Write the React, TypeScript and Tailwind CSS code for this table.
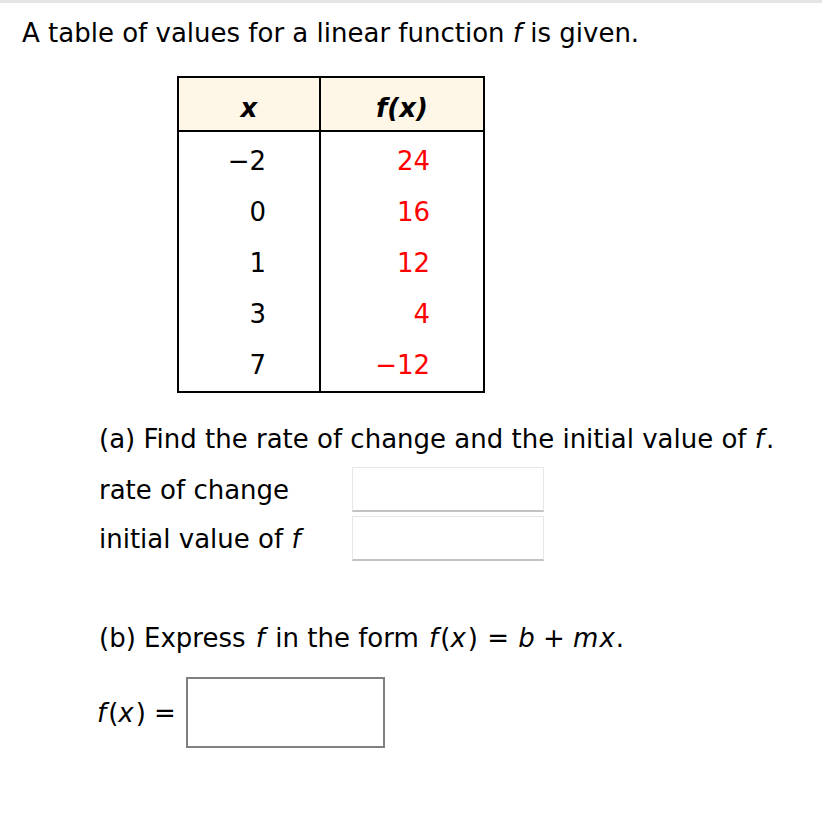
const rows = [
  { x: '−2', fx: '24' },
  { x: '0', fx: '16' },
  { x: '1', fx: '12' },
  { x: '3', fx: '4' },
  { x: '7', fx: '−12' },
]

// italic variable with a little math spacing after it
function V({ children, gap = '' }: { children: React.ReactNode; gap?: string }) {
  return <i className={`inline-block ${gap}`}>{children}</i>
}

export default function App() {
  return (
    <div
      className="min-h-screen border-t-[3px] border-[#e4e4e4] bg-white text-[26px] text-black"
      style={{ fontFamily: '"DejaVu Sans", Verdana, sans-serif' }}
    >
      <p className="pl-[22px] pt-[15px] leading-[30px]">
        A table of values for a linear function <i>f</i> is given.
      </p>

      {/* values table */}
      <div className="ml-[177px] mt-[28px] w-[308px] border-2 border-black">
        <div className="flex h-[54px] border-b-2 border-black bg-[#fef6e7] pt-[8px] font-bold italic">
          <div className="-mt-[8px] flex w-[142px] items-center justify-center border-r-2 border-black pt-[8px]">
            x
          </div>
          <div className="flex flex-1 items-center justify-center">f(x)</div>
        </div>
        <div className="flex">
          <div className="w-[142px] border-r-2 border-black pt-[4px]">
            {rows.map((r) => (
              <div key={r.x} className="h-[51px] pr-[53px] text-right leading-[51px]">
                {r.x}
              </div>
            ))}
          </div>
          <div className="flex-1 pt-[4px] text-[#ff0000]">
            {rows.map((r) => (
              <div key={r.fx} className="h-[51px] pr-[53px] text-right leading-[51px]">
                {r.fx}
              </div>
            ))}
          </div>
        </div>
      </div>

      {/* part a */}
      <div className="pl-[99px]">
        <p className="mt-[31px] leading-[30px]">
          (a) Find the rate of change and the initial value of <V gap="mr-[2px]">f</V>.
        </p>
        <div className="mt-[13px] flex flex-col gap-[4px]">
          <div className="flex items-center">
            <span className="w-[253px] leading-[30px]">rate of change</span>
            <div className="h-[45px] w-[192px] border border-b-2 border-[#e6e6e6] border-b-[#c2c2c2]" />
          </div>
          <div className="flex items-center">
            <span className="w-[253px] leading-[30px]">
              initial value of <i>f</i>
            </span>
            <div className="h-[45px] w-[192px] border border-b-2 border-[#e6e6e6] border-b-[#c2c2c2]" />
          </div>
        </div>

        {/* part b */}
        <p className="mt-[62px] leading-[30px]">
          (b) Express <V gap="mx-[2px]">f</V> in the form <V gap="ml-[2px] mr-[2px]">f</V>(
          <V gap="mr-[2px]">x</V>) <span className="mx-[1px]">=</span> <i>b</i> +{' '}
          <i className="tracking-[1px]">mx</i>.
        </p>
        <div className="mt-[24px] flex items-center">
          <span className="-ml-[2px] w-[89px] leading-[30px]">
            <V gap="mr-[2px]">f</V>(<V gap="mr-[2px]">x</V>) =
          </span>
          <div className="h-[71px] w-[199px] border-2 border-[#808080]" />
        </div>
      </div>
    </div>
  )
}
